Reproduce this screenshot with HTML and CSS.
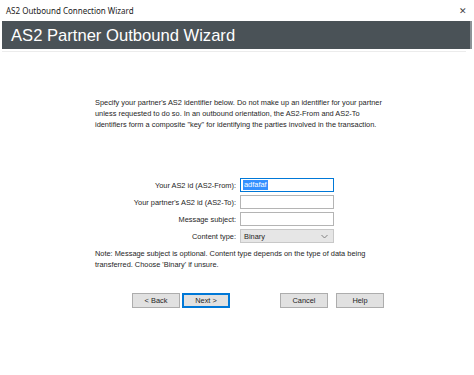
FILE: index.html
```html
<!DOCTYPE html>
<html lang="en">
  <head>
    <meta charset="UTF-8" />
    <title>AS2 Outbound Connection Wizard</title>
    <link rel="stylesheet" href="styles.css">
  </head>
  <body>
    <div class="window">
      <div class="titlebar">
        <span class="title">AS2 Outbound Connection Wizard</span>
        <span class="close">&#x2715;</span>
      </div>
      <div class="banner">AS2 Partner Outbound Wizard</div>
      <div class="rule"></div>

      <div class="content">
        <p class="intro">
          Specify your partner's AS2 identifier below. Do not make up an identifier for your partner<br>
          unless requested to do so. In an outbound orientation, the AS2-From and AS2-To<br>
          identifiers form a composite "key" for identifying the parties involved in the transaction.
        </p>

        <div class="form">
          <label class="form-label">Your AS2 id (AS2-From):</label>
          <div class="field focused"><span class="selected">adfafaf</span></div>

          <label class="form-label">Your partner's AS2 id (AS2-To):</label>
          <div class="field"></div>

          <label class="form-label">Message subject:</label>
          <div class="field"></div>

          <label class="form-label">Content type:</label>
          <div class="field select">
            <span>Binary</span>
            <svg class="chevron" width="7" height="5" viewBox="0 0 7 5">
              <path d="M0.5 1 L3.5 4 L6.5 1" fill="none" stroke="#777" stroke-width="0.9" />
            </svg>
          </div>
        </div>

        <p class="note">
          Note: Message subject is optional. Content type depends on the type of data being<br>
          transferred. Choose 'Binary' if unsure.
        </p>
      </div>

      <div class="buttons">
        <button class="button">&lt; Back</button>
        <button class="button default">Next &gt;</button>
        <span class="spacer"></span>
        <button class="button">Cancel</button>
        <button class="button">Help</button>
      </div>
    </div>
  </body>
</html>
```

FILE: styles.css
```css
/* 基本样式 */
* {
  margin: 0;
  padding: 0;
  box-sizing: border-box;
}

body {
  font-family: "Liberation Sans", Arial, sans-serif;
  color: #1e1e1e;
  background-color: #fff;
}

.window {
  width: 474px;
  height: 375px;
}

.titlebar {
  height: 21px;
  display: flex;
  align-items: center;
  justify-content: space-between;
  padding: 0 7px 0 6px;
  font-family: "Noto Sans", sans-serif;
  font-size: 8px;
  color: #222;
}

.close {
  font-size: 9px;
  color: #444;
}

.banner {
  margin: 0 2px;
  height: 28px;
  line-height: 29px;
  padding-left: 9px;
  background-color: #4a5257;
  border-right: 2px solid #8d9397;
  color: #fff;
  font-size: 16.6px;
}

.rule {
  margin: 2px 8px 0 2px;
  height: 1px;
  background-color: #ececec;
}

.content {
  padding-left: 95px;
}

.intro {
  margin-top: 45px;
  font-size: 7.4px;
  line-height: 11px;
  white-space: nowrap;
}

/* 表单 */
.form {
  display: grid;
  grid-template-columns: 141px 94px;
  grid-auto-rows: 14px;
  row-gap: 3px;
  column-gap: 4px;
  margin-top: 48px;
  align-items: center;
}

.form-label {
  text-align: right;
  font-size: 7.4px;
}

.field {
  height: 14px;
  border: 1px solid #b4b4b4;
  background-color: #fff;
  font-size: 7.4px;
  display: flex;
  align-items: center;
  padding-left: 2px;
}

.field.focused {
  border-color: #0078d7;
}

.selected {
  background-color: #3390ff;
  color: #fff;
  padding: 0 1px;
  line-height: 10px;
}

.field.select {
  background-color: #e6e6e6;
  border-color: #c8c8c8;
  justify-content: space-between;
  padding: 0 5px 0 3px;
}

.note {
  margin-top: 5px;
  font-size: 7.4px;
  line-height: 11px;
  white-space: nowrap;
}

/* 按钮 */
.buttons {
  display: flex;
  gap: 2px;
  margin-top: 23px;
  padding-left: 132px;
}

.button {
  width: 48px;
  height: 15px;
  background-color: #e1e1e1;
  border: 1px solid #adadad;
  font-family: "Liberation Sans", Arial, sans-serif;
  font-size: 7.4px;
  color: #1e1e1e;
}

.button.default {
  border: 1px solid #0078d7;
  box-shadow: inset 0 0 0 1px #0078d7;
}

.spacer {
  width: 46px;
}

.buttons .button:last-child {
  margin-left: 6px;
}
```
